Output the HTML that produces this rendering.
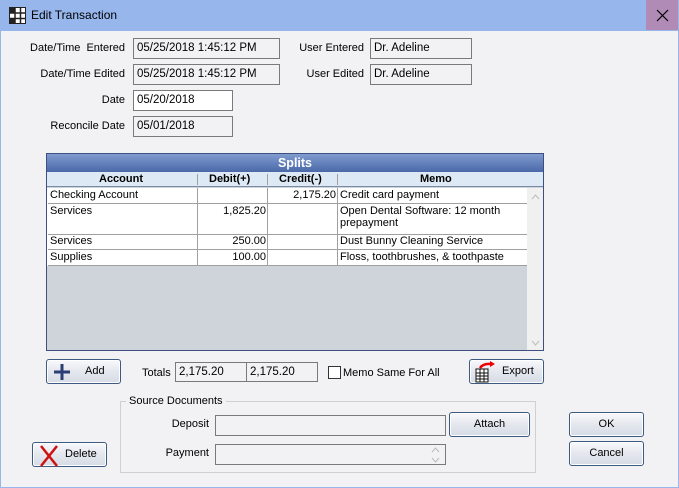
<!DOCTYPE html>
<html><head><style>
*{box-sizing:border-box;margin:0;padding:0}
body{width:679px;height:488px;overflow:hidden;font-family:"Liberation Sans",sans-serif;font-size:11px;color:#000;background:#f2f1f3;position:relative}
.a{position:absolute}
.lbl{position:absolute;text-align:right;white-space:nowrap}
.box{position:absolute;border:1px solid #7a7a7a;background:#f2f1f3;padding:3px 0 0 3px;white-space:nowrap;font-size:11.5px}
.btn{position:absolute;border:1px solid #3d5a80;border-radius:3px;background:linear-gradient(#f8f9fb,#e4e7ee 50%,#d6dbe5);text-align:center;box-shadow:inset 0 0 0 1px #fff}
.g{position:absolute;white-space:nowrap}
.hl{position:absolute;left:1px;width:480px;height:1px;background:#a0a0a0}
.vl{position:absolute;width:1px;background:#a0a0a0}
</style></head><body>
<div class="a" style="left:0;top:0;width:679px;height:31px;background:#96b6ec"></div>
<div class="a" style="left:646px;top:0;width:33px;height:30px;background:#b08bb6"></div>
<div class="a" style="left:678px;top:0;width:1px;height:488px;background:#96b6ec"></div>
<div class="a" style="left:0;top:487px;width:679px;height:1px;background:#96b6ec"></div>
<div class="a" style="left:0;top:0;width:1px;height:488px;background:#96b6ec"></div>
<svg class="a" style="left:656px;top:9px" width="13" height="13"><path d="M1 1L12 12M12 1L1 12" stroke="#000" stroke-width="1.2"/></svg>
<svg class="a" style="left:9px;top:7px" width="17" height="17"><rect x="0.5" y="0.5" width="16" height="16" fill="#fff" stroke="#222"/><path d="M0 6H17M0 11.5H17M6 0V17M11.5 0V17" stroke="#222" stroke-width="1.5"/><rect x="1" y="1" width="4.5" height="4.5" fill="#222"/><rect x="1" y="12" width="4.5" height="4.5" fill="#222"/></svg>
<div class="a" style="left:31px;top:8px;font-size:12px">Edit Transaction</div>

<div class="lbl" style="right:554px;top:42px">Date/Time&nbsp; Entered</div>
<div class="box" style="left:133px;top:38px;width:147px;height:21px">05/25/2018 1:45:12 PM</div>
<div class="lbl" style="right:554px;top:68px">Date/Time Edited</div>
<div class="box" style="left:133px;top:64px;width:147px;height:21px">05/25/2018 1:45:12 PM</div>
<div class="lbl" style="right:554px;top:94px">Date</div>
<div class="box" style="left:133px;top:90px;width:100px;height:21px;background:#fff">05/20/2018</div>
<div class="lbl" style="right:554px;top:120px">Reconcile Date</div>
<div class="box" style="left:133px;top:116px;width:100px;height:21px">05/01/2018</div>
<div class="lbl" style="right:315px;top:42px">User Entered</div>
<div class="box" style="left:370px;top:38px;width:102px;height:21px">Dr. Adeline</div>
<div class="lbl" style="right:315px;top:68px">User Edited</div>
<div class="box" style="left:370px;top:64px;width:102px;height:21px">Dr. Adeline</div>

<div class="a" style="left:46px;top:153px;width:498px;height:198px;border:1px solid #3d5080;background:#ced4da">
 <div class="a" style="left:0;top:0;width:496px;height:18px;background:linear-gradient(#7f9bcf,#4a68a8);color:#fff;font-weight:bold;font-size:12.5px;text-align:center;line-height:18px">Splits</div>
 <div class="a" style="left:0;top:18px;width:496px;height:15px;background:#dde9f5;font-weight:bold;border-bottom:1px solid #7a8aa8">
  <div class="g" style="left:52px;top:1px">Account</div><div class="g" style="left:162px;top:1px">Debit(+)</div><div class="g" style="left:232px;top:1px">Credit(-)</div><div class="g" style="left:373px;top:1px">Memo</div>
  <div class="vl" style="left:150px;top:2px;height:11px"></div><div class="vl" style="left:220px;top:2px;height:11px"></div><div class="vl" style="left:290px;top:2px;height:11px"></div>
 </div>
 <div class="a" style="left:0;top:34px;width:480px;height:78px;background:#fff"></div>
 <div class="vl" style="left:150px;top:34px;height:78px"></div><div class="vl" style="left:220px;top:34px;height:78px"></div><div class="vl" style="left:290px;top:34px;height:78px"></div>
 <div class="hl" style="top:49px"></div><div class="hl" style="top:80px"></div><div class="hl" style="top:95px"></div><div class="hl" style="top:111px"></div>
 <div class="g" style="left:3px;top:35px">Checking Account</div><div class="g" style="right:207px;top:35px">2,175.20</div><div class="g" style="left:293px;top:35px">Credit card payment</div>
 <div class="g" style="left:3px;top:51px">Services</div><div class="g" style="right:277px;top:51px">1,825.20</div><div class="g" style="left:293px;top:51px;line-height:12px">Open Dental Software: 12 month<br>prepayment</div>
 <div class="g" style="left:3px;top:81px">Services</div><div class="g" style="right:277px;top:81px">250.00</div><div class="g" style="left:293px;top:81px">Dust Bunny Cleaning Service</div>
 <div class="g" style="left:3px;top:97px">Supplies</div><div class="g" style="right:277px;top:97px">100.00</div><div class="g" style="left:293px;top:97px">Floss, toothbrushes, &amp; toothpaste</div>
 <div class="a" style="left:480px;top:34px;width:16px;height:162px;background:#f0f0f0"></div>
 <svg class="a" style="left:484px;top:40px" width="9" height="6"><path d="M1 5L4.5 1L8 5" stroke="#bbb" fill="none"/></svg>
 <svg class="a" style="left:484px;top:186px" width="9" height="6"><path d="M1 1L4.5 5L8 1" stroke="#bbb" fill="none"/></svg>
</div>

<div class="btn" style="left:46px;top:359px;width:75px;height:25px"><svg class="a" style="left:6px;top:3px" width="18" height="18"><path d="M9 1V17M1 9H17" stroke="#2b3f75" stroke-width="3"/></svg><span class="a" style="left:38px;top:5px">Add</span></div>
<div class="lbl" style="left:142px;top:367px">Totals</div>
<div class="box" style="left:175px;top:362px;width:72px;height:20px">2,175.20</div>
<div class="box" style="left:246px;top:362px;width:72px;height:20px">2,175.20</div>
<div class="a" style="left:328px;top:366px;width:13px;height:13px;border:1px solid #333;background:#fff"></div>
<div class="g" style="left:343px;top:367px">Memo Same For All</div>
<div class="btn" style="left:469px;top:359px;width:75px;height:25px"><svg class="a" style="left:5px;top:1px" width="22" height="22"><rect x="1" y="8" width="12" height="13" fill="#fff" stroke="#111"/><path d="M1 12H13M1 15H13M1 18H13M5 8V21M9 8V21" stroke="#111"/><path d="M5 7Q8 2 17 3" stroke="#e00" stroke-width="2.5" fill="none"/><path d="M15 0L20 3L15 6Z" fill="#e00"/></svg><span class="a" style="left:32px;top:5px">Export</span></div>

<div class="a" style="left:120px;top:401px;width:416px;height:72px;border:1px solid #d0d0d0"></div>
<div class="g" style="left:126px;top:395px;background:#f2f1f3;padding:0 3px">Source Documents</div>
<div class="lbl" style="right:470px;top:418px">Deposit</div>
<div class="box" style="left:215px;top:415px;width:231px;height:21px;background:#f2f1f3"></div>
<div class="btn" style="left:449px;top:412px;width:81px;height:25px;line-height:23px">Attach</div>
<div class="lbl" style="right:470px;top:447px">Payment</div>
<div class="box" style="left:215px;top:444px;width:231px;height:21px"></div>
<svg class="a" style="left:431px;top:447px" width="9" height="16"><path d="M1 5L4.5 1L8 5M1 11L4.5 15L8 11" stroke="#bbb" fill="none"/></svg>

<div class="btn" style="left:32px;top:442px;width:75px;height:25px"><svg class="a" style="left:6px;top:2px" width="20" height="22"><path d="M2 1L18 21M18 1L2 21" stroke="#d01010" stroke-width="2.5"/></svg><span class="a" style="left:32px;top:5px">Delete</span></div>
<div class="btn" style="left:569px;top:412px;width:75px;height:25px;line-height:23px">OK</div>
<div class="btn" style="left:569px;top:441px;width:75px;height:25px;line-height:23px">Cancel</div>
</body></html>
